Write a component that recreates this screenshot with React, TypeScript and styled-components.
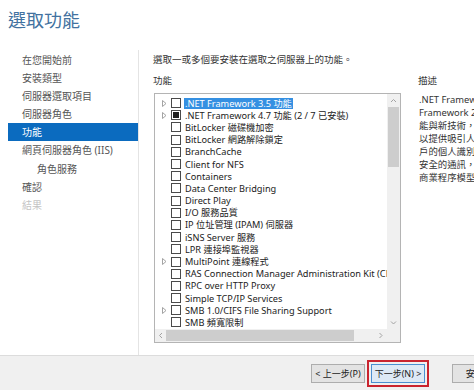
import React from 'react';
import styled, { createGlobalStyle } from 'styled-components';

const GlobalStyle = createGlobalStyle`
  html, body {
    margin: 0;
    padding: 0;
    background: #ffffff;
  }
  body {
    font-family: "Noto Sans", "Noto Sans CJK TC", sans-serif;
    overflow: hidden;
  }
`;

const Window = styled.div`
  width: 474px;
  height: 390px;
  display: flex;
  flex-direction: column;
  overflow: hidden;
  background: #ffffff;
`;

const Title = styled.h1`
  margin: 0;
  padding: 9px 0 0 8px;
  height: 42px;
  box-sizing: border-box;
  font-size: 18px;
  font-weight: 400;
  line-height: 22px;
  color: #4272a0;
`;

const Body = styled.div`
  flex: 1;
  display: flex;
  min-height: 0;
`;

const Nav = styled.nav`
  width: 130px;
  margin-top: 8px;
  padding: 1px 0 0 8px;
  border-right: 1px solid #e4e4e4;
  flex-shrink: 0;
`;

const NavItem = styled.div<{ $active?: boolean; $disabled?: boolean; $indent?: boolean }>`
  height: 18.1px;
  line-height: 18px;
  padding-left: ${({ $indent }) => ($indent ? 29 : 14)}px;
  font-size: 10px;
  white-space: nowrap;
  background: ${({ $active }) => ($active ? '#0b6bbf' : 'transparent')};
  color: ${({ $active, $disabled }) => ($active ? '#ffffff' : $disabled ? '#c4c4c4' : '#555555')};
`;

const Content = styled.div`
  flex: 1;
  padding: 11px 0 0 14px;
  display: flex;
  flex-direction: column;
  min-width: 0;
`;

const Intro = styled.div`
  font-size: 9.5px;
  line-height: 14px;
  color: #333333;
  white-space: nowrap;
`;

const Columns = styled.div`
  display: flex;
  margin-top: 7px;
`;

const FeatureColumn = styled.div`
  width: 247px;
  flex-shrink: 0;
  margin-left: 1px;
`;

const Label = styled.div`
  font-size: 9.5px;
  line-height: 14px;
  color: #333333;
  margin-bottom: 5px;
  margin-left: -1px;
`;

const ListBox = styled.div`
  width: 247px;
  height: 250px;
  box-sizing: border-box;
  border: 1px solid #b4b4b4;
  display: grid;
  grid-template-columns: 1fr 13px;
  grid-template-rows: 1fr 13px;
`;

const Viewport = styled.div`
  overflow: hidden;
  padding-top: 3px;
`;

const Row = styled.div`
  height: 12.2px;
  display: flex;
  align-items: center;
  padding-left: 7px;
  white-space: nowrap;
`;

const Expander = styled.span`
  width: 9px;
  flex-shrink: 0;
  display: flex;
  align-items: center;
`;

const Check = styled.span<{ $partial?: boolean }>`
  width: 10px;
  height: 10px;
  box-sizing: border-box;
  border: 1px solid #4a4a4a;
  background: #ffffff;
  flex-shrink: 0;
  margin-right: 4px;
  display: flex;
  align-items: center;
  justify-content: center;
  &::after {
    content: '';
    display: ${({ $partial }) => ($partial ? 'block' : 'none')};
    width: 6px;
    height: 6px;
    background: #1e1e1e;
  }
`;

const ItemText = styled.span<{ $selected?: boolean }>`
  font-size: 9.2px;
  line-height: 11px;
  padding: 0 1px;
  margin-left: -1px;
  color: ${({ $selected }) => ($selected ? '#ffffff' : '#222222')};
  background: ${({ $selected }) => ($selected ? '#3590e2' : 'transparent')};
`;

const VScroll = styled.div`
  background: #f0f0f0;
  display: flex;
  flex-direction: column;
`;

const HScroll = styled.div`
  background: #f0f0f0;
  display: flex;
`;

const Corner = styled.div`
  background: #f0f0f0;
`;

const ArrowCell = styled.div<{ $size: number }>`
  width: ${({ $size }) => $size}px;
  height: 13px;
  flex-shrink: 0;
  display: flex;
  align-items: center;
  justify-content: center;
`;

const VArrowCell = styled.div`
  height: 13px;
  flex-shrink: 0;
  display: flex;
  align-items: center;
  justify-content: center;
`;

const VThumb = styled.div`
  height: 60px;
  margin: 0 1px;
  background: #cdcdcd;
`;

const HThumb = styled.div`
  width: 188px;
  margin: 1px 0;
  background: #cdcdcd;
`;

const Spacer = styled.div`
  flex: 1;
`;

const DescColumn = styled.div`
  margin-left: 18px;
  width: 160px;
  flex-shrink: 0;
`;

const DescText = styled.div`
  margin-top: 5px;
  font-size: 9.4px;
  line-height: 13px;
  color: #333333;
  white-space: nowrap;
`;

const Footer = styled.footer`
  height: 35px;
  box-sizing: border-box;
  flex-shrink: 0;
  border-top: 1px solid #dcdcdc;
  background: #f0f0f0;
  display: flex;
  align-items: center;
  padding-left: 311px;
`;

const Button = styled.button<{ $primary?: boolean; $marked?: boolean; $gap?: number }>`
  width: 54px;
  height: 19px;
  flex-shrink: 0;
  box-sizing: border-box;
  padding: 0;
  margin-left: ${({ $gap }) => $gap ?? 0}px;
  font-family: "Noto Sans", "Noto Sans CJK TC", sans-serif;
  font-size: 9px;
  color: #222222;
  white-space: nowrap;
  background: ${({ $primary }) => ($primary ? '#dde9f5' : '#e3e3e3')};
  border: 1px solid ${({ $primary }) => ($primary ? '#4b8fd0' : '#adadad')};
  outline: ${({ $marked }) => ($marked ? '2px solid #c9242f' : 'none')};
  outline-offset: 2px;
`;

const Caret = ({ dir }: { dir: 'up' | 'down' | 'left' | 'right' }) => {
  const paths = {
    up: 'M1 4 L3.5 1.5 L6 4',
    down: 'M1 1.5 L3.5 4 L6 1.5',
    left: 'M4 1 L1.5 3.5 L4 6',
    right: 'M1.5 1 L4 3.5 L1.5 6',
  };
  const vertical = dir === 'up' || dir === 'down';
  return (
    <svg width={vertical ? 7 : 6} height={vertical ? 6 : 7} viewBox={vertical ? '0 0 7 6' : '0 0 6 7'}>
      <path d={paths[dir]} fill="none" stroke="#a3a3a3" strokeWidth="1" />
    </svg>
  );
};

const Triangle = () => (
  <svg width="5" height="7" viewBox="0 0 5 7">
    <path d="M0.5 0.5 L4 3.5 L0.5 6.5 Z" fill="none" stroke="#9a9a9a" strokeWidth="0.9" />
  </svg>
);

const steps = [
  { label: '在您開始前' },
  { label: '安裝類型' },
  { label: '伺服器選取項目' },
  { label: '伺服器角色' },
  { label: '功能', active: true },
  { label: '網頁伺服器角色 (IIS)' },
  { label: '角色服務', indent: true },
  { label: '確認' },
  { label: '結果', disabled: true },
];

type Feature = { label: string; expand?: boolean; partial?: boolean; selected?: boolean };

const features: Feature[] = [
  { label: '.NET Framework 3.5 功能', expand: true, selected: true },
  { label: '.NET Framework 4.7 功能 (2 / 7 已安裝)', expand: true, partial: true },
  { label: 'BitLocker 磁碟機加密' },
  { label: 'BitLocker 網路解除鎖定' },
  { label: 'BranchCache' },
  { label: 'Client for NFS' },
  { label: 'Containers' },
  { label: 'Data Center Bridging' },
  { label: 'Direct Play' },
  { label: 'I/O 服務品質' },
  { label: 'IP 位址管理 (IPAM) 伺服器' },
  { label: 'iSNS Server 服務' },
  { label: 'LPR 連接埠監視器' },
  { label: 'MultiPoint 連線程式', expand: true },
  { label: 'RAS Connection Manager Administration Kit (CMAK)' },
  { label: 'RPC over HTTP Proxy' },
  { label: 'Simple TCP/IP Services' },
  { label: 'SMB 1.0/CIFS File Sharing Support', expand: true },
  { label: 'SMB 頻寬限制' },
];

const description = [
  '.NET Framework 3.5 結合了 .NET',
  'Framework 2.0 API 的強大功',
  '能與新技術，用於建置應用程式，',
  '以提供吸引人的使用者介面、保護客',
  '戶的個人識別資訊、啟用順暢且',
  '安全的通訊，以及提供為各種',
  '商業程序模型化的能力。',
];

export default function App() {
  return (
    <Window>
      <GlobalStyle />
      <Title>選取功能</Title>
      <Body>
        <Nav>
          {steps.map((s) => (
            <NavItem key={s.label} $active={s.active} $disabled={s.disabled} $indent={s.indent}>
              {s.label}
            </NavItem>
          ))}
        </Nav>
        <Content>
          <Intro>選取一或多個要安裝在選取之伺服器上的功能。</Intro>
          <Columns>
            <FeatureColumn>
              <Label>功能</Label>
              <ListBox>
                <Viewport>
                  {features.map((f) => (
                    <Row key={f.label}>
                      <Expander>{f.expand && <Triangle />}</Expander>
                      <Check $partial={f.partial} />
                      <ItemText $selected={f.selected}>{f.label}</ItemText>
                    </Row>
                  ))}
                </Viewport>
                <VScroll>
                  <VArrowCell>
                    <Caret dir="up" />
                  </VArrowCell>
                  <VThumb />
                  <Spacer />
                  <VArrowCell>
                    <Caret dir="down" />
                  </VArrowCell>
                </VScroll>
                <HScroll>
                  <ArrowCell $size={11}>
                    <Caret dir="left" />
                  </ArrowCell>
                  <HThumb />
                  <Spacer />
                  <ArrowCell $size={13}>
                    <Caret dir="right" />
                  </ArrowCell>
                </HScroll>
                <Corner />
              </ListBox>
            </FeatureColumn>
            <DescColumn>
              <Label>描述</Label>
              <DescText>
                {description.map((line) => (
                  <div key={line}>{line}</div>
                ))}
              </DescText>
            </DescColumn>
          </Columns>
        </Content>
      </Body>
      <Footer>
        <Button>&lt; 上一步(P)</Button>
        <Button $primary $marked $gap={6}>
          下一步(N) &gt;
        </Button>
        <Button $gap={27}>安裝(I)</Button>
      </Footer>
    </Window>
  );
}
